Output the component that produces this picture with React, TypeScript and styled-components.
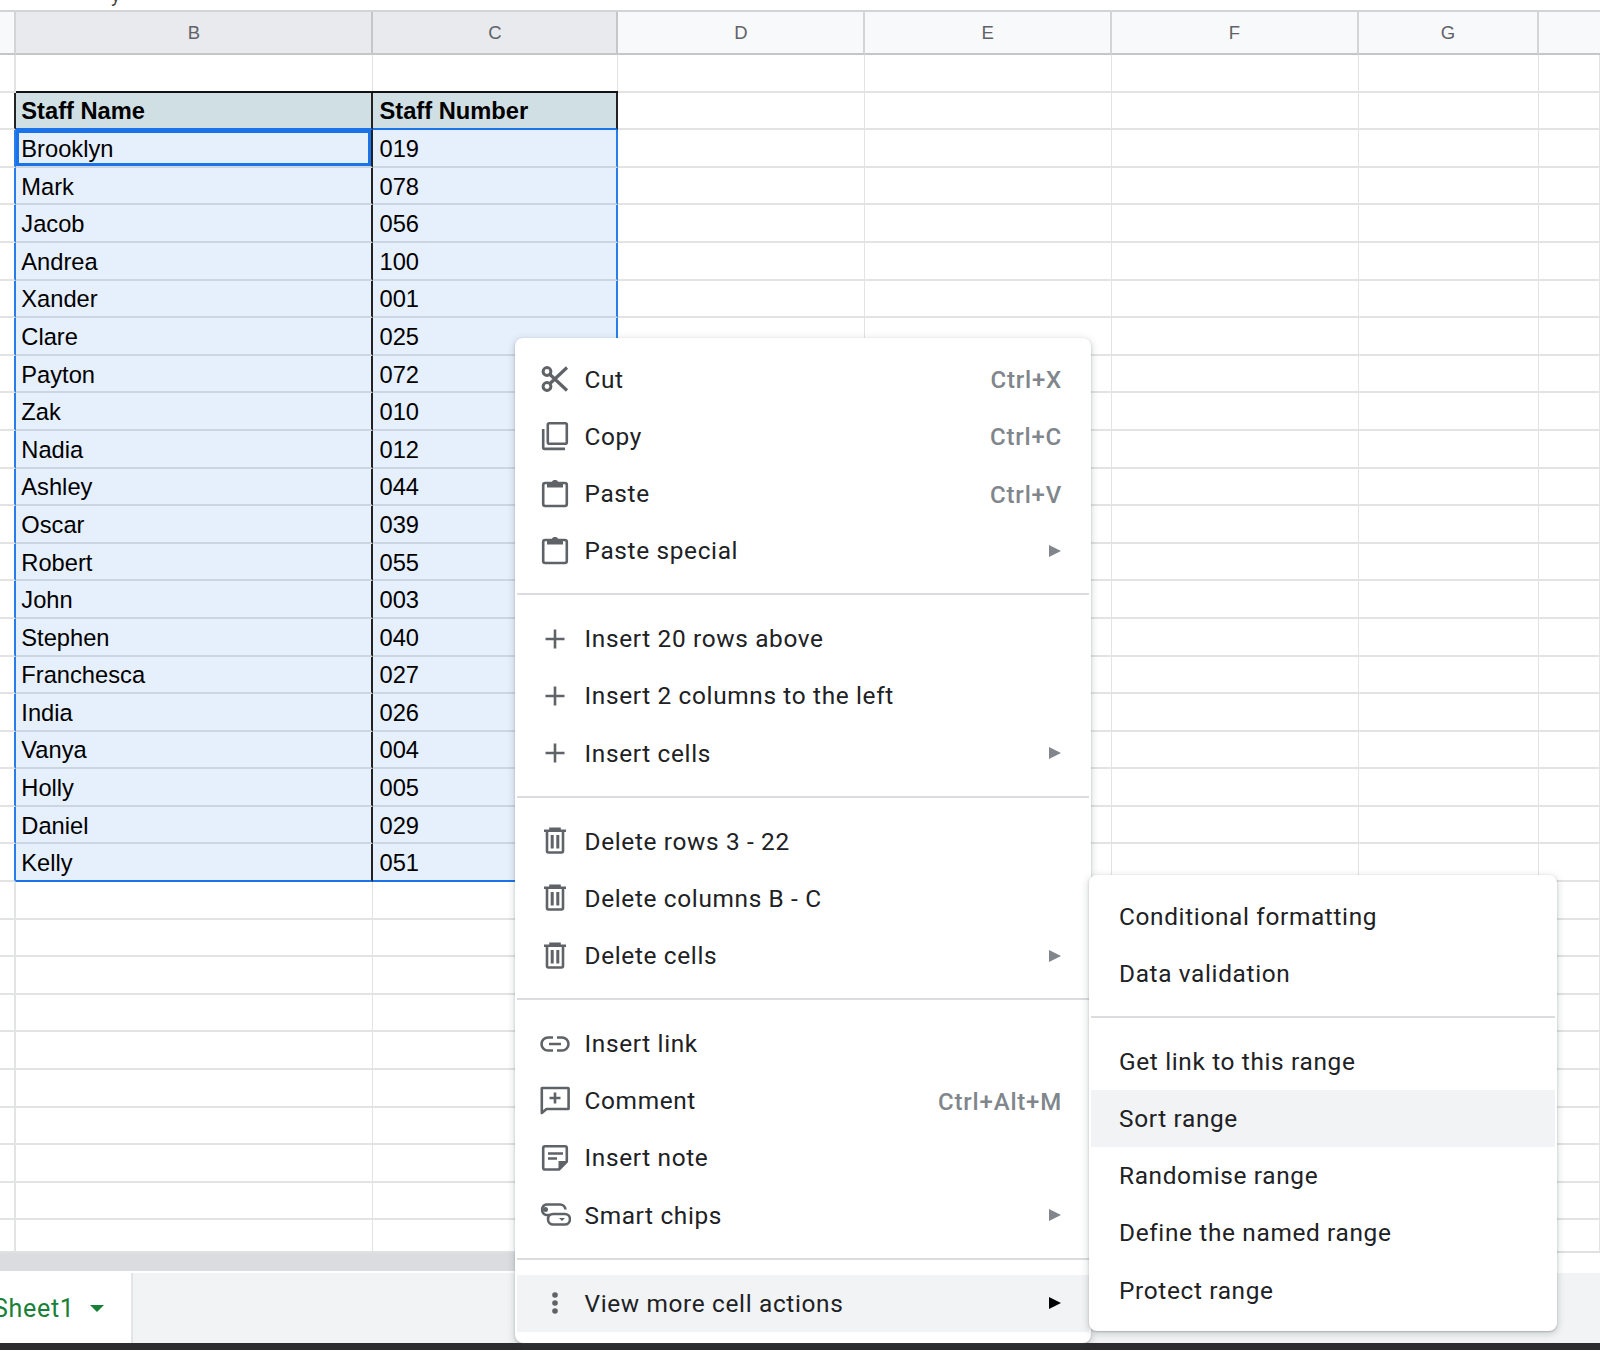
import React from "react";
import styled, { createGlobalStyle } from "styled-components";

const GlobalStyle = createGlobalStyle`
  html, body { margin: 0; padding: 0; background: #fff; }
`;

const COLUMNS = "16.3px 357.2px 244.9px 246.9px 246.7px 247px 179.8px 61.1px";

const Page = styled.div`
  position: relative;
  width: 1600px;
  height: 1350px;
  display: flex;
  flex-direction: column;
  overflow: hidden;
  background: #fff;
  font-family: "Liberation Sans", Arial, sans-serif;
`;

const FormulaEdge = styled.div`
  height: 12px;
  flex: none;
  box-sizing: border-box;
  padding-left: 16px;
  overflow: hidden;
  background: #fff;
  border-bottom: 2px solid #d3d4d5;
`;

const FormulaText = styled.div`
  border-left: 2px solid #c4c6c8;
  padding-left: 60px;
  height: 5px;
  font: 20px/1 "Roboto", sans-serif;
  color: #444;
  span {
    display: block;
    margin-top: -15px;
    margin-left: 33px;
  }
`;

const HeaderRow = styled.div`
  display: grid;
  flex: none;
  grid-template-columns: ${COLUMNS};
  height: 43px;
`;

const HeaderCell = styled.div<{ $active?: boolean }>`
  box-sizing: border-box;
  display: flex;
  align-items: center;
  justify-content: center;
  border-right: 2px solid ${(p) => (p.$active ? "#c4c6c8" : "#d3d4d5")};
  border-bottom: 2px solid #c4c6c8;
  background: ${(p) => (p.$active ? "#e8eaed" : "#f8f9fa")};
  color: #5f6368;
  font: 18.5px "Liberation Sans", Arial, sans-serif;
  &:last-child { border-right: none; }
`;

const Sheet = styled.div`
  flex: 1;
  min-height: 0;
  overflow: hidden;
  border-bottom: 2px solid #dfe0e1;
`;

const Row = styled.div`
  display: grid;
  grid-template-columns: ${COLUMNS};
  height: 37.6px;
`;

type CellKind = "plain" | "head" | "name" | "number" | "active";

const borderRight: Record<CellKind, string> = {
  plain: "#e2e3e3",
  head: "#222",
  name: "#222",
  active: "#222",
  number: "#2a7de9",
};

const Cell = styled.div<{ $kind: CellKind; $last?: boolean }>`
  box-sizing: border-box;
  padding: 3px 0 0 5px;
  display: flex;
  align-items: center;
  white-space: nowrap;
  font-size: 23.7px;
  color: #000;
  font-weight: ${(p) => (p.$kind === "head" ? 700 : 400)};
  background: ${(p) =>
    p.$kind === "head" ? "#d0dfe3" : p.$kind === "plain" ? "#fff" : "#e6effc"};
  border-right: ${(p) => (p.$kind === "plain" ? 1 : 2)}px solid ${(p) => borderRight[p.$kind]};
  border-bottom: 2px solid
    ${(p) =>
      p.$last
        ? "#1a73e8"
        : p.$kind === "plain"
          ? "#e2e3e3"
          : p.$kind === "head"
            ? "#1a73e8"
            : "#cdd6e0"};
  ${(p) => p.$kind === "head" && "box-shadow: 0 -2px 0 #111;"}
  ${(p) => p.$kind === "active" && "box-shadow: inset 0 0 0 3px #1a73e8;"}
  &:nth-child(3) { padding-left: 6px; }
`;

const Stub = styled.div<{ $kind: "plain" | "head" | "body" }>`
  box-sizing: border-box;
  border-bottom: 2px solid #e2e3e3;
  border-right: 2px solid
    ${(p) => (p.$kind === "plain" ? "#e2e3e3" : p.$kind === "head" ? "#222" : "#2a7de9")};
`;

const Bars = styled.div`
  flex: none;
  display: flex;
  flex-direction: column;
`;

const ScrollTrack = styled.div`
  height: 18px;
  margin-bottom: 2px;
  background: #fff;
`;

const ScrollThumb = styled.div`
  width: 900px;
  height: 100%;
  background: #dadce0;
`;

const TabBar = styled.div`
  height: 70px;
  display: flex;
  background: #f1f3f4;
`;

const SheetTab = styled.div`
  width: 133px;
  box-sizing: border-box;
  display: flex;
  align-items: center;
  gap: 15px;
  background: #fff;
  border-right: 2px solid #e3e4e6;
  overflow: hidden;
`;

const TabName = styled.span`
  margin-left: -7px;
  font: 400 25px "Roboto", sans-serif;
  letter-spacing: 0.7px;
  color: #188038;
`;

const TabCaret = styled.span`
  width: 0;
  height: 0;
  border-left: 7px solid transparent;
  border-right: 7px solid transparent;
  border-top: 7px solid #188038;
`;

const BottomEdge = styled.div`
  height: 7px;
  flex: none;
  background: #2c2c2e;
`;

const Menu = styled.div<{ $left: number; $top: number; $width: number; $height: number }>`
  position: absolute;
  left: ${(p) => p.$left}px;
  top: ${(p) => p.$top}px;
  width: ${(p) => p.$width}px;
  height: ${(p) => p.$height}px;
  box-sizing: border-box;
  padding: 12.6px 2px 0;
  background: #fff;
  border-radius: 8px;
  box-shadow: 0 2px 6px 2px rgba(60, 64, 67, 0.15), 0 1px 2px rgba(60, 64, 67, 0.3);
  font-family: "Roboto", sans-serif;
`;

const Item = styled.div<{ $highlight?: boolean; $inset?: number }>`
  height: 57.2px;
  display: flex;
  align-items: center;
  box-sizing: border-box;
  padding: 0 28px 0 ${(p) => p.$inset ?? 21.5}px;
  background: ${(p) => (p.$highlight ? "#f1f3f4" : "transparent")};
`;

const IconSlot = styled.span`
  width: 32px;
  height: 32px;
  flex: none;
  margin-right: 14px;
  color: #5f6368;
  svg { display: block; }
`;

const Label = styled.span`
  font-size: 24.4px;
  letter-spacing: 0.65px;
  color: #202124;
  white-space: nowrap;
`;

const Shortcut = styled.span`
  margin-left: auto;
  margin-right: -1px;
  padding-top: 2px;
  font-size: 24px;
  font-weight: 500;
  letter-spacing: 0.8px;
  color: #80868b;
`;

const Arrow = styled.span<{ $dark?: boolean }>`
  margin-left: auto;
  width: 0;
  height: 0;
  border-top: 6px solid transparent;
  border-bottom: 6px solid transparent;
  border-left: 12px solid ${(p) => (p.$dark ? "#000" : "#80868b")};
`;

const Divider = styled.div`
  height: 2px;
  margin: 14px 0 14.85px;
  background: #dadce0;
`;

const Svg = ({ children }: { children: React.ReactNode }) => (
  <svg width="32" height="32" viewBox="0 0 32 32" fill="none" stroke="currentColor" strokeWidth="2.6">
    {children}
  </svg>
);

const CutIcon = () => (
  <Svg>
    <circle cx="8" cy="8.500" r="3.900" strokeWidth="3" />
    <circle cx="8" cy="23.500" r="3.900" strokeWidth="3" />
    <path d="M11 11.500 28 27.500M11 20.500 28 4.500" strokeWidth="3.200" />
  </Svg>
);

const CopyIcon = () => (
  <Svg>
    <rect x="8.800" y="3.200" width="19" height="20.500" rx="1.500" />
    <path d="M4.200 9v18.500c0 .8.600 1.400 1.400 1.400H26" />
  </Svg>
);

const PasteIcon = () => (
  <Svg>
    <rect x="4.200" y="5" width="23.600" height="23" rx="2" />
    <path d="M8 4h5c.4-2.600 5.600-2.600 6 0h5v5.500H8z" fill="currentColor" stroke="none" />
  </Svg>
);

const PlusIcon = () => (
  <Svg>
    <path d="M16 6.500v19M6.500 16h19" />
  </Svg>
);

const TrashIcon = () => (
  <Svg>
    <path d="M5 5.800h22M11.500 5.500V3.800h9v1.700" />
    <path d="M8 6v20c0 .9.600 1.500 1.500 1.500h13c.9 0 1.500-.6 1.500-1.500V6" />
    <path d="M13.200 10v13.500M18.800 10v13.500" strokeWidth="3" />
  </Svg>
);

const LinkIcon = () => (
  <Svg>
    <path d="M14 9.500H9a6.500 6.500 0 0 0 0 13h5M18 9.500h5a6.500 6.500 0 0 1 0 13h-5M10 16h12" />
  </Svg>
);

const CommentIcon = () => (
  <Svg>
    <path d="M3 3h26c.3 0 .6.300.6.600v19.800c0 .3-.3.600-.6.600H7.500L2.800 28V3.300z" strokeLinejoin="round" />
    <path d="M16 7.500v11M10.500 13h11" />
  </Svg>
);

const NoteIcon = () => (
  <Svg>
    <path d="M20 27.500H6c-1 0-1.800-.8-1.800-1.800V6c0-1 .8-1.800 1.800-1.800h20c1 0 1.800.8 1.800 1.800v13.500z" strokeLinejoin="round" />
    <path d="M28 19h-8.500v8.500z" fill="currentColor" stroke="none" />
    <path d="M9 11.500h15M9 16.500h9" />
  </Svg>
);

const ChipsIcon = () => (
  <Svg>
    <path d="M24 16H7a5.500 5.500 0 0 1 0-10.500h14a5.500 5.500 0 0 1 5.500 5" />
    <rect x="9" y="15" width="22" height="10.500" rx="5.200" fill="#fff" />
    <circle cx="6.500" cy="10.500" r="2.500" fill="currentColor" stroke="none" />
    <path d="M20 19h6l-3 3z" fill="currentColor" stroke="none" />
  </Svg>
);

const DotsIcon = () => (
  <Svg>
    <g fill="currentColor" stroke="none">
      <circle cx="16" cy="8" r="2.800" />
      <circle cx="16" cy="16" r="2.800" />
      <circle cx="16" cy="24" r="2.800" />
    </g>
  </Svg>
);

const staff: [string, string][] = [
  ["Brooklyn", "019"],
  ["Mark", "078"],
  ["Jacob", "056"],
  ["Andrea", "100"],
  ["Xander", "001"],
  ["Clare", "025"],
  ["Payton", "072"],
  ["Zak", "010"],
  ["Nadia", "012"],
  ["Ashley", "044"],
  ["Oscar", "039"],
  ["Robert", "055"],
  ["John", "003"],
  ["Stephen", "040"],
  ["Franchesca", "027"],
  ["India", "026"],
  ["Vanya", "004"],
  ["Holly", "005"],
  ["Daniel", "029"],
  ["Kelly", "051"],
];

const EmptyCells = () => (
  <>
    {[0, 1, 2, 3, 4].map((i) => (
      <Cell key={i} $kind="plain" />
    ))}
  </>
);

const EmptyRow = () => (
  <Row>
    <Stub $kind="plain" />
    <Cell $kind="plain" />
    <Cell $kind="plain" />
    <EmptyCells />
  </Row>
);

type Entry =
  | "divider"
  | { icon: React.ReactNode; label: string; shortcut?: string; more?: boolean; highlight?: boolean; dark?: boolean };

const mainEntries: Entry[] = [
  { icon: <CutIcon />, label: "Cut", shortcut: "Ctrl+X" },
  { icon: <CopyIcon />, label: "Copy", shortcut: "Ctrl+C" },
  { icon: <PasteIcon />, label: "Paste", shortcut: "Ctrl+V" },
  { icon: <PasteIcon />, label: "Paste special", more: true },
  "divider",
  { icon: <PlusIcon />, label: "Insert 20 rows above" },
  { icon: <PlusIcon />, label: "Insert 2 columns to the left" },
  { icon: <PlusIcon />, label: "Insert cells", more: true },
  "divider",
  { icon: <TrashIcon />, label: "Delete rows 3 - 22" },
  { icon: <TrashIcon />, label: "Delete columns B - C" },
  { icon: <TrashIcon />, label: "Delete cells", more: true },
  "divider",
  { icon: <LinkIcon />, label: "Insert link" },
  { icon: <CommentIcon />, label: "Comment", shortcut: "Ctrl+Alt+M" },
  { icon: <NoteIcon />, label: "Insert note" },
  { icon: <ChipsIcon />, label: "Smart chips", more: true },
  "divider",
  { icon: <DotsIcon />, label: "View more cell actions", more: true, highlight: true, dark: true },
];

const subEntries: (string | null)[] = [
  "Conditional formatting",
  "Data validation",
  null,
  "Get link to this range",
  "Sort range",
  "Randomise range",
  "Define the named range",
  "Protect range",
];

export default function App() {
  return (
    <Page>
      <GlobalStyle />
      <FormulaEdge>
        <FormulaText>
          <span>y</span>
        </FormulaText>
      </FormulaEdge>
      <HeaderRow>
        <HeaderCell />
        <HeaderCell $active>B</HeaderCell>
        <HeaderCell $active>C</HeaderCell>
        <HeaderCell>D</HeaderCell>
        <HeaderCell>E</HeaderCell>
        <HeaderCell>F</HeaderCell>
        <HeaderCell>G</HeaderCell>
        <HeaderCell />
      </HeaderRow>
      <Sheet>
        <EmptyRow />
        <Row>
          <Stub $kind="head" />
          <Cell $kind="head">Staff Name</Cell>
          <Cell $kind="head">Staff Number</Cell>
          <EmptyCells />
        </Row>
        {staff.map(([name, number], i) => (
          <Row key={name}>
            <Stub $kind="body" />
            <Cell $kind={i === 0 ? "active" : "name"} $last={i === staff.length - 1}>
              {name}
            </Cell>
            <Cell $kind="number" $last={i === staff.length - 1}>
              {number}
            </Cell>
            <EmptyCells />
          </Row>
        ))}
        {Array.from({ length: 10 }, (_, i) => (
          <EmptyRow key={i} />
        ))}
      </Sheet>
      <Bars>
        <ScrollTrack>
          <ScrollThumb />
        </ScrollTrack>
        <TabBar>
          <SheetTab>
            <TabName>Sheet1</TabName>
            <TabCaret />
          </SheetTab>
        </TabBar>
      </Bars>
      <BottomEdge />

      <Menu $left={515} $top={338} $width={576} $height={1005}>
        {mainEntries.map((entry, i) =>
          entry === "divider" ? (
            <Divider key={i} />
          ) : (
            <Item key={entry.label} $highlight={entry.highlight}>
              <IconSlot>{entry.icon}</IconSlot>
              <Label>{entry.label}</Label>
              {entry.shortcut && <Shortcut>{entry.shortcut}</Shortcut>}
              {entry.more && <Arrow $dark={entry.dark} />}
            </Item>
          )
        )}
      </Menu>

      <Menu $left={1089} $top={875} $width={468} $height={456}>
        {subEntries.map((label, i) =>
          label === null ? (
            <Divider key={i} />
          ) : (
            <Item key={label} $inset={28} $highlight={label === "Sort range"}>
              <Label>{label}</Label>
            </Item>
          )
        )}
      </Menu>
    </Page>
  );
}
